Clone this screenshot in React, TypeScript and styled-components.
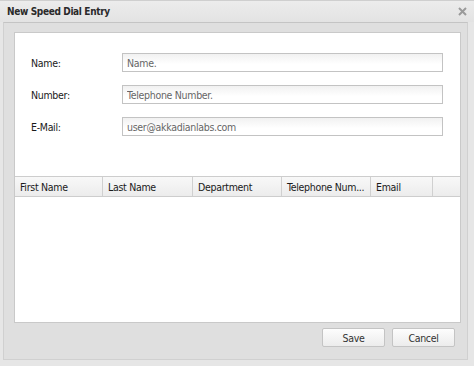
import React from "react";
import styled, { createGlobalStyle } from "styled-components";

const Global = createGlobalStyle`
  html, body { margin: 0; padding: 0; }
  body { font-family: "DejaVu Sans Condensed", "DejaVu Sans", sans-serif; font-size: 10.5px; letter-spacing: -0.3px; color: #1a1a1a; }
`;

const Window = styled.div`
  width: 474px;
  height: 366px;
  background: #e6e6e6;
  display: flex;
  flex-direction: column;
  box-sizing: border-box;
  border-top: 1px solid #cfcfcf;
`;

const TitleBar = styled.div`
  height: 21px;
  display: flex;
  align-items: center;
  justify-content: space-between;
  padding: 0 7px 0 7px;
  background: linear-gradient(#ececec, #e3e3e3);
  font-weight: bold;
  color: #2a2a2a;
  font-size: 10px;
  letter-spacing: -0.35px;
`;

const Close = styled.svg`
  width: 9px;
  height: 9px;
`;

const Frame = styled.div`
  flex: 1;
  margin: 0 6px 6px 3px;
  border: 1px solid #d0d0d0;
  border-top: 1px solid #c4c4c4;
  background: #dfdfdf;
  padding: 9px 6px 0 10px;
  display: flex;
  flex-direction: column;
`;

const Panel = styled.div`
  height: 291px;
  box-sizing: border-box;
  background: #fff;
  border: 1px solid #c9c9c9;
  display: flex;
  flex-direction: column;
`;

const Form = styled.div`
  height: 143px;
  box-sizing: border-box;
  padding: 20px 17px 0 16px;
  display: grid;
  grid-template-columns: 91px 1fr;
  row-gap: 13px;
  align-content: start;
`;

const Label = styled.label`
  display: flex;
  align-items: center;
  height: 19px;
  color: #1a1a1a;
`;

const Input = styled.input`
  height: 19px;
  box-sizing: border-box;
  border: 1px solid #c3c3c3;
  background: linear-gradient(#f1f1f1, #fff 60%);
  padding: 0 4px;
  font-family: inherit;
  font-size: 10.5px;
  letter-spacing: -0.3px;
  color: #555;
  outline: none;
  &::placeholder { color: #666; }
`;

const Header = styled.div`
  display: grid;
  grid-template-columns: 88px 90px 89px 89px 62px 1fr;
  height: 21px;
  box-sizing: border-box;
  border-top: 1px solid #cdcdcd;
  border-bottom: 1px solid #cdcdcd;
  background: linear-gradient(#f8f8f8, #ececec);
`;

const HeadCell = styled.div<{ $last?: boolean }>`
  display: flex;
  align-items: center;
  padding-left: 5px;
  border-right: 1px solid ${(p) => (p.$last ? "transparent" : "#d0d0d0")};
  color: #1a1a1a;
  white-space: nowrap;
  overflow: hidden;
`;

const Buttons = styled.div`
  display: flex;
  justify-content: flex-end;
  gap: 7px;
  padding: 5px 6px 0 0;
`;

const Button = styled.button`
  width: 63px;
  height: 19px;
  border: 1px solid #c4c4c4;
  border-radius: 2px;
  background: linear-gradient(#fdfdfd, #ececec);
  font-family: inherit;
  font-size: 10.5px;
  letter-spacing: -0.3px;
  color: #333;
  padding: 0;
`;

export default function App() {
  return (
    <>
      <Global />
      <Window>
        <TitleBar>
          <span>New Speed Dial Entry</span>
          <Close viewBox="0 0 9 9">
            <path d="M1 1L8 8M8 1L1 8" stroke="#9a9a9a" strokeWidth="2" />
          </Close>
        </TitleBar>
        <Frame>
          <Panel>
            <Form>
              <Label>Name:</Label>
              <Input placeholder="Name." />
              <Label>Number:</Label>
              <Input placeholder="Telephone Number." />
              <Label>E-Mail:</Label>
              <Input placeholder="user@akkadianlabs.com" />
            </Form>
            <Header>
              <HeadCell>First Name</HeadCell>
              <HeadCell>Last Name</HeadCell>
              <HeadCell>Department</HeadCell>
              <HeadCell>Telephone Num...</HeadCell>
              <HeadCell>Email</HeadCell>
              <HeadCell $last />
            </Header>
          </Panel>
          <Buttons>
            <Button>Save</Button>
            <Button>Cancel</Button>
          </Buttons>
        </Frame>
      </Window>
    </>
  );
}
